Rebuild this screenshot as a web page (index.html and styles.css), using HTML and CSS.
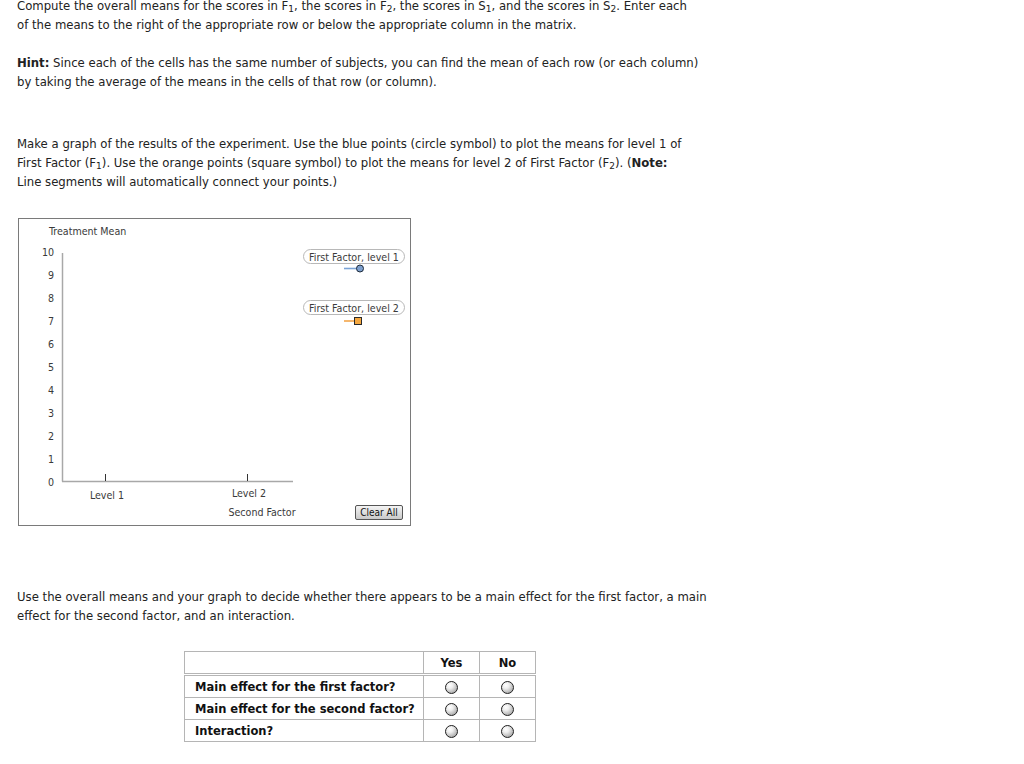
FILE: index.html
```html
<!DOCTYPE html>
<html>
<head>
<meta charset="utf-8">
<link rel="stylesheet" href="styles.css">
</head>
<body>
<div class="page">
  <p class="para p1">Compute the overall means for the scores in F<sub>1</sub>, the scores in F<sub>2</sub>, the scores in S<sub>1</sub>, and the scores in S<sub>2</sub>. Enter each<br>of the means to the right of the appropriate row or below the appropriate column in the matrix.</p>
  <p class="para p2"><b>Hint:</b> Since each of the cells has the same number of subjects, you can find the mean of each row (or each column)<br>by taking the average of the means in the cells of that row (or column).</p>
  <p class="para p3">Make a graph of the results of the experiment. Use the blue points (circle symbol) to plot the means for level 1 of<br>First Factor (F<sub>1</sub>). Use the orange points (square symbol) to plot the means for level 2 of First Factor (F<sub>2</sub>). (<b>Note:</b><br>Line segments will automatically connect your points.)</p>

  <div class="graph">
    <svg class="chart" width="391" height="306" viewBox="0 0 391 306">
      <g class="lbl">
        <text x="30" y="16">Treatment Mean</text>
        <g text-anchor="end">
          <text x="35" y="37">10</text>
          <text x="35" y="60">9</text>
          <text x="35" y="83">8</text>
          <text x="35" y="106">7</text>
          <text x="35" y="129">6</text>
          <text x="35" y="152">5</text>
          <text x="35" y="175">4</text>
          <text x="35" y="198">3</text>
          <text x="35" y="221">2</text>
          <text x="35" y="244">1</text>
          <text x="35" y="267">0</text>
        </g>
        <text x="88" y="280" text-anchor="middle">Level 1</text>
        <text x="230" y="278" text-anchor="middle">Level 2</text>
        <text x="243" y="297" text-anchor="middle">Second Factor</text>
      </g>
      <line x1="43.5" y1="34" x2="43.5" y2="262.5" class="axis"/>
      <line x1="43" y1="262.5" x2="274" y2="262.5" class="axis"/>
      <line x1="86.5" y1="255" x2="86.5" y2="262" class="tick"/>
      <line x1="228.5" y1="255" x2="228.5" y2="262" class="tick"/>

      <rect x="284.5" y="30.5" width="101" height="14" rx="7" class="pill"/>
      <text x="335" y="41.5" text-anchor="middle" class="lbl">First Factor, level 1</text>
      <line x1="325" y1="49.5" x2="338" y2="49.5" class="blue-line"/>
      <circle cx="341" cy="49.5" r="3.5" class="blue-pt"/>

      <rect x="284.5" y="81.5" width="101" height="14" rx="7" class="pill"/>
      <text x="335" y="92.5" text-anchor="middle" class="lbl">First Factor, level 2</text>
      <line x1="325" y1="102" x2="336" y2="102" class="orange-line"/>
      <rect x="335.5" y="98.5" width="7" height="7" class="orange-pt"/>
    </svg>
    <div class="clear-btn">Clear All</div>
  </div>

  <p class="para p4">Use the overall means and your graph to decide whether there appears to be a main effect for the first factor, a main<br>effect for the second factor, and an interaction.</p>

  <table class="effects">
    <tr class="head">
      <th class="c-label"></th>
      <th class="c-opt">Yes</th>
      <th class="c-opt">No</th>
    </tr>
    <tr>
      <td class="c-label">Main effect for the first factor?</td>
      <td class="c-opt"><span class="radio"></span></td>
      <td class="c-opt"><span class="radio"></span></td>
    </tr>
    <tr>
      <td class="c-label">Main effect for the second factor?</td>
      <td class="c-opt"><span class="radio"></span></td>
      <td class="c-opt"><span class="radio"></span></td>
    </tr>
    <tr>
      <td class="c-label">Interaction?</td>
      <td class="c-opt"><span class="radio"></span></td>
      <td class="c-opt"><span class="radio"></span></td>
    </tr>
  </table>
</div>
</body>
</html>
```
FILE: styles.css
```css
html, body {
  margin: 0;
  padding: 0;
  background: #ffffff;
}
body {
  font-family: "DejaVu Sans", Verdana, sans-serif;
  font-size: 11.7px;
  color: #222222;
}
.page {
  padding-left: 17px;
  width: 1000px;
}
.para {
  margin: 0;
  line-height: 19px;
  white-space: nowrap;
}
.para sub {
  font-size: 9px;
  line-height: 0;
  vertical-align: -2px;
}
.para b {
  font-weight: bold;
}
.p1 { margin-top: -3px; }
.p2 { margin-top: 19px; }
.p3 { margin-top: 43px; }
.graph {
  position: relative;
  margin-top: 26px;
  margin-left: 1px;
  width: 391px;
  height: 306px;
  border: 1px solid #7a7a7a;
}
.chart {
  display: block;
}
.lbl, .lbl text {
  font-family: "DejaVu Sans Condensed", "DejaVu Sans", sans-serif;
  font-size: 10.6px;
  fill: #3a3a3a;
}
.axis {
  stroke: #a8a8a8;
  stroke-width: 1.5;
}
.tick {
  stroke: #333333;
  stroke-width: 1;
}
.pill {
  fill: #ffffff;
  stroke: #b8b8b8;
  stroke-width: 1;
}
.blue-line {
  stroke: #7aa3d6;
  stroke-width: 1.6;
}
.blue-pt {
  fill: #7d9fcd;
  stroke: #1d2a3a;
  stroke-width: 1;
}
.orange-line {
  stroke: #f3a64a;
  stroke-width: 1.6;
}
.orange-pt {
  fill: #f5a840;
  stroke: #2a2a2a;
  stroke-width: 1;
}
.clear-btn {
  position: absolute;
  left: 336px;
  top: 286px;
  width: 46px;
  height: 13px;
  line-height: 13px;
  text-align: center;
  font-family: "DejaVu Sans Condensed", "DejaVu Sans", sans-serif;
  font-size: 10px;
  color: #111111;
  border: 1px solid #555555;
  border-radius: 2px;
  background: linear-gradient(#f4f4f4, #c9c9c9);
}
.p4 { margin-top: 62px; }
.effects {
  margin-top: 25px;
  margin-left: 167px;
  border-collapse: collapse;
  border: 1px solid #a9a9a9;
  font-family: "DejaVu Sans", Verdana, sans-serif;
  font-size: 11.5px;
  font-weight: bold;
  color: #111111;
  white-space: nowrap;
}
.effects th, .effects td {
  border: 1px solid #b5b5b5;
  height: 21px;
  padding: 0;
}
.effects .head th {
  border-bottom: 3px double #b5b5b5;
}
.c-label {
  width: 228px;
  text-align: left;
  padding-left: 10px !important;
}
.c-opt {
  width: 55px;
  text-align: center;
}
.radio {
  display: inline-block;
  width: 11px;
  height: 11px;
  border-radius: 50%;
  border: 1px solid #222222;
  background: radial-gradient(circle at 35% 30%, #ffffff 0%, #eeeeee 30%, #b0b0b0 75%, #7a7a7a 100%);
  vertical-align: middle;
}
```
